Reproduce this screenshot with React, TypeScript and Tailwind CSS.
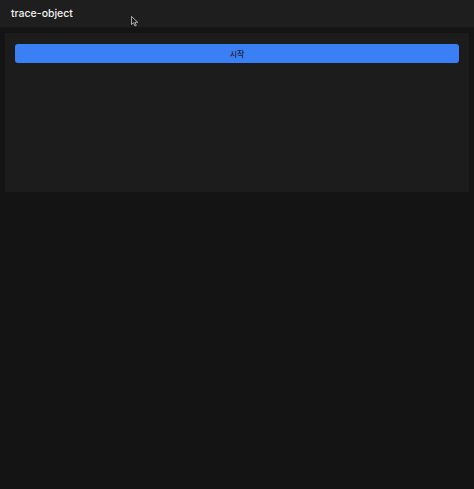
import React from "react";

export default function App() {
  return (
    <div className="relative min-h-[489px] w-full bg-[#141414]" style={{ fontFamily: '"Liberation Sans", "Noto Sans CJK KR", sans-serif' }}>
      <header className="flex h-[28px] items-center bg-[#1e1e1e] px-[11px] border-b border-[#171717]">
        <h1 className="text-[10.5px] font-medium text-[#f2f2f2]" style={{ fontFamily: 'Inter, "Liberation Sans", sans-serif' }}>trace-object</h1>
      </header>
      <main className="p-[5px]">
        <section className="h-[159px] bg-[#1c1c1c] p-[10px] pt-[11px]">
          <button className="flex h-[19px] w-full items-center justify-center rounded-[3px] bg-[#3b7ff5] text-[8px] font-medium text-[#1b2238]" style={{ fontFamily: '"Noto Sans CJK KR", sans-serif' }}>
            시작
          </button>
        </section>
      </main>
      <svg className="absolute left-[131px] top-[16px]" width="8" height="11" viewBox="0 0 8 11">
        <path d="M0.5 0.5 L0.5 8.5 L2.5 6.8 L4 10 L5.3 9.4 L3.9 6.3 L6.8 6.3 Z" fill="#1a1a1a" stroke="#cfcfcf" strokeWidth="0.8" />
      </svg>
    </div>
  );
}
